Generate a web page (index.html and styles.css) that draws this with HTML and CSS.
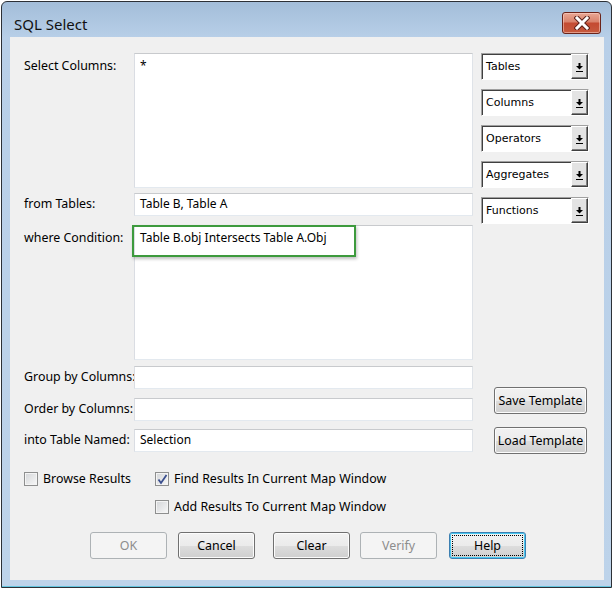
FILE: index.html
```html
<!DOCTYPE html>
<html lang="en">
<head>
    <meta charset="UTF-8">
    <title>SQL Select</title>
    <link rel="stylesheet" href="styles.css">
</head>
<body>
    <div class="window">
        <div class="titlebar">
            <span class="title">SQL Select</span>
            <div class="close">
                <svg width="16" height="14" viewBox="0 0 16 14">
                    <path d="M3 2 L13 12 M13 2 L3 12" stroke="#5a2018" stroke-width="5" stroke-linecap="square"/>
                    <path d="M3 2 L13 12 M13 2 L3 12" stroke="#ffffff" stroke-width="3" stroke-linecap="square"/>
                </svg>
            </div>
        </div>

        <div class="client">
            <div class="top">
                <div class="fields">
                    <div class="label tall">Select Columns:</div>
                    <div class="textbox area">*</div>

                    <div class="label from-row">from Tables:</div>
                    <div class="textbox from-row">Table B, Table A</div>

                    <div class="label tall">where Condition:</div>
                    <div class="textbox area where">
                        Table B.obj Intersects Table A.Obj
                        <div class="highlight"></div>
                    </div>
                </div>

                <div class="pickers">
                    <div class="picker"><span class="picker-text">Tables</span><span class="picker-btn"></span></div>
                    <div class="picker"><span class="picker-text">Columns</span><span class="picker-btn"></span></div>
                    <div class="picker"><span class="picker-text">Operators</span><span class="picker-btn"></span></div>
                    <div class="picker"><span class="picker-text">Aggregates</span><span class="picker-btn"></span></div>
                    <div class="picker"><span class="picker-text">Functions</span><span class="picker-btn"></span></div>
                </div>
            </div>

            <div class="middle">
                <div class="fields">
                    <div class="label">Group by Columns:</div>
                    <div class="textbox"></div>

                    <div class="label row-2">Order by Columns:</div>
                    <div class="textbox row-2"></div>

                    <div class="label row-3">into Table Named:</div>
                    <div class="textbox row-3">Selection</div>
                </div>

                <div class="templates">
                    <div class="btn wide">Save Template</div>
                    <div class="btn wide">Load Template</div>
                </div>
            </div>

            <div class="checks">
                <div class="check-row">
                    <div class="check browse"><span class="box"></span>Browse Results</div>
                    <div class="check"><span class="box">
                        <svg width="11" height="11" viewBox="0 0 11 11"><path d="M1.5 5.5 L4 9 L9.5 1" fill="none" stroke="#3b4f8e" stroke-width="1.8"/></svg>
                    </span>Find Results In Current Map Window</div>
                </div>
                <div class="check-row second">
                    <div class="check"><span class="box"></span>Add Results To Current Map Window</div>
                </div>
            </div>

            <div class="actions">
                <div class="btn disabled">OK</div>
                <div class="btn cancel">Cancel</div>
                <div class="btn clear">Clear</div>
                <div class="btn disabled verify">Verify</div>
                <div class="btn help">Help</div>
            </div>
        </div>
    </div>
</body>
</html>
```

FILE: styles.css
```css
body {
    margin: 0;
    background: #fff;
    font-family: "Noto Sans", "Open Sans", sans-serif;
    font-size: 12px;
    color: #000;
}

.window {
    margin: 1px 0 0 1px;
    width: 611px;
    height: 587px;
    box-sizing: border-box;
    border: 1px solid #2c3036;
    border-radius: 6px 6px 0 0;
    background: linear-gradient(#a3bdd9 0, #b8cfe8 36px, #bdd3ea 100%);
    box-shadow: inset 0 -1px 0 #62c4de;
    padding: 0 7px 7px 8px;
    display: flex;
    flex-direction: column;
}

.titlebar {
    height: 35px;
    display: flex;
    justify-content: space-between;
    align-items: flex-start;
    flex-shrink: 0;
}

.title {
    margin: 12px 0 0 4px;
    font-size: 15px;
    line-height: 20px;
    color: #111;
}

.close {
    margin: 10px 3px 0 0;
    width: 39px;
    height: 22px;
    box-sizing: border-box;
    border: 1px solid #6b241a;
    border-radius: 3px;
    background: linear-gradient(#e9a794 0%, #d9826b 45%, #c44a31 50%, #c65a3e 100%);
    box-shadow: inset 0 0 0 1px rgba(255, 220, 210, 0.5);
    display: flex;
    align-items: center;
    justify-content: center;
}

.client {
    flex: 1;
    background: #f0f0f0;
    padding: 16px 0 0 14px;
}

.top {
    display: flex;
    gap: 8px;
}

.fields {
    display: grid;
    grid-template-columns: 110px 339px;
    align-content: start;
}

.label {
    line-height: 16px;
    padding-top: 3px;
    white-space: nowrap;
    font-size: 12.4px;
}

.label.tall {
    padding-top: 5px;
}

.textbox {
    height: 23px;
    box-sizing: border-box;
    background: #fff;
    border: 1px solid;
    border-color: #c8cacd #dfe3e8 #e3e9ef #dadde3;
    padding: 2px 5px;
    line-height: 16px;
}

.textbox.area {
    height: 135px;
    padding-top: 4px;
}

.from-row {
    margin: 5px 0 9px;
}

.where {
    position: relative;
}

.highlight {
    position: absolute;
    left: -3px;
    top: -1px;
    width: 224px;
    height: 32px;
    box-sizing: border-box;
    border: 2px solid #3d9a3d;
    box-shadow: 1px 2px 3px rgba(0, 0, 0, 0.25);
}

.pickers {
    display: flex;
    flex-direction: column;
    gap: 9px;
}

.picker {
    width: 108px;
    height: 27px;
    box-sizing: border-box;
    border: 1px solid;
    border-color: #a0a0a0 #fff #fff #a0a0a0;
    background: #fff;
    display: flex;
    font-family: "DejaVu Sans", sans-serif;
    font-size: 11px;
}

.picker-text {
    flex: 1;
    border-top: 1px solid #404040;
    border-left: 1px solid #404040;
    padding-left: 3px;
    line-height: 24px;
}

.picker-btn {
    width: 17px;
    box-sizing: border-box;
    border: 1px solid;
    border-color: #fff #404040 #404040 #fff;
    box-shadow: inset -1px -1px 0 #808080;
    background: #e3e3e3 url("data:image/svg+xml,%3Csvg xmlns='http://www.w3.org/2000/svg' width='7' height='9'%3E%3Crect x='2.5' y='0' width='2' height='3' fill='%23000'/%3E%3Cpath d='M0 3 H7 L3.5 6.5 Z' fill='%23000'/%3E%3Crect x='0' y='8' width='7' height='1' fill='%23000'/%3E%3C/svg%3E") no-repeat 4px 8px;
}

.middle {
    display: flex;
    gap: 21px;
    margin-top: 6px;
}

.row-2 {
    margin-top: 9px;
}

.row-3 {
    margin-top: 8px;
}

.templates {
    display: flex;
    flex-direction: column;
    gap: 13px;
    padding-top: 21px;
}

.btn {
    width: 77px;
    height: 27px;
    box-sizing: border-box;
    border: 1px solid #707070;
    border-radius: 3px;
    background: linear-gradient(#f2f2f2 0%, #ebebeb 50%, #dddddd 51%, #cfcfcf 100%);
    box-shadow: inset 0 0 0 1px #fcfcfc;
    display: flex;
    align-items: center;
    justify-content: center;
    line-height: 16px;
    font-size: 12.4px;
    position: relative;
}

.btn.wide {
    width: 93px;
}

.btn.disabled {
    border-color: #adb2b5;
    background: #f4f4f4;
    box-shadow: none;
    color: #8d8d8d;
}

.btn.help {
    border-color: #3c7fb1;
    box-shadow: inset 0 0 0 1px #48c8f0;
}

.btn.help::after {
    content: "";
    position: absolute;
    inset: 2px;
    border: 1px dotted #000;
    border-radius: 1px;
}

.checks {
    margin-top: 18px;
}

.check-row {
    display: flex;
    height: 14px;
}

.check-row.second {
    margin-top: 14px;
    padding-left: 131px;
}

.check {
    display: flex;
    align-items: center;
    line-height: 14px;
    white-space: nowrap;
    font-size: 12.4px;
}

.check.browse {
    width: 131px;
}

.box {
    width: 14px;
    height: 14px;
    box-sizing: border-box;
    border: 1px solid #8e8f8f;
    background: linear-gradient(135deg, #d3d5d8, #f8f8f8);
    box-shadow: inset 0 0 0 1px #f4f4f4;
    margin-right: 5px;
    display: flex;
    align-items: center;
    justify-content: center;
}

.actions {
    display: flex;
    margin-top: 18px;
    padding-left: 66px;
}

.cancel {
    margin-left: 11px;
}

.clear {
    margin-left: 18px;
}

.verify {
    margin-left: 10px;
}

.help {
    margin-left: 12px;
}
```
